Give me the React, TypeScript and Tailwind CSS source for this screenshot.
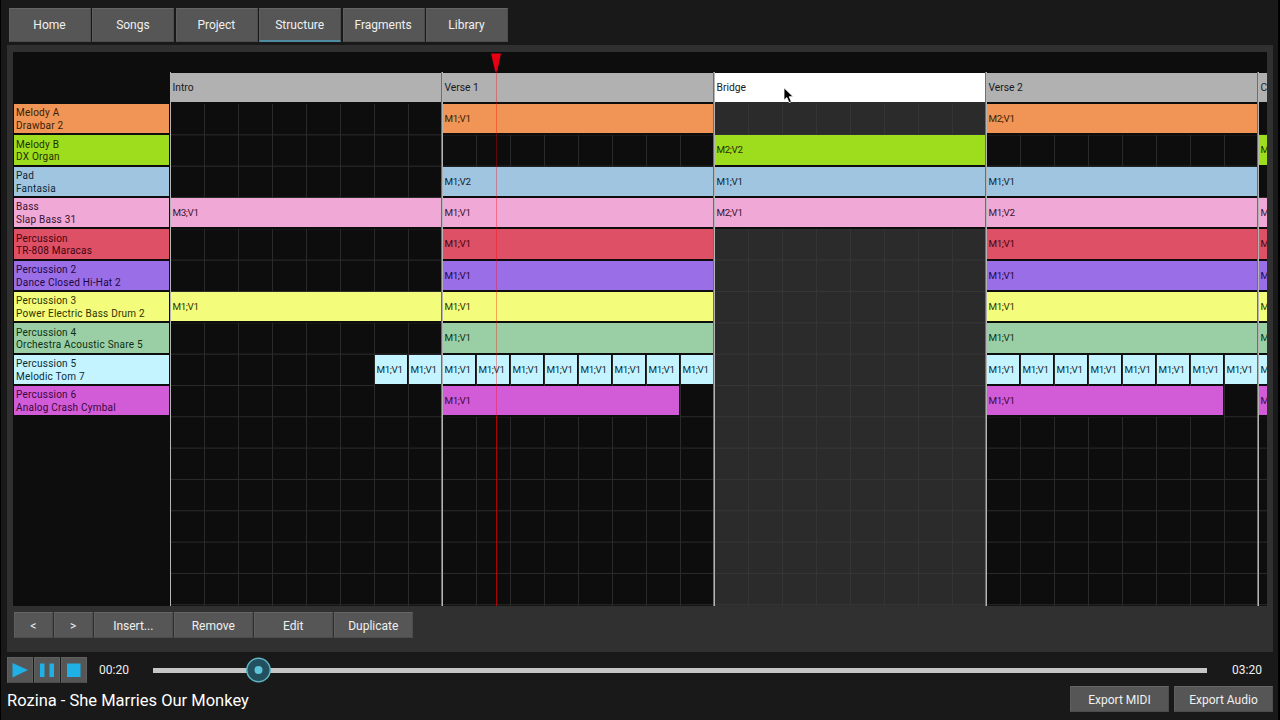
import { clsx } from "clsx";

type Clip = { at: number; span: number; name: string };
type Section = { title: string; selected?: boolean; clips: Record<number, Clip[]> };

const tabs = ["Home", "Songs", "Project", "Structure", "Fragments", "Library"];

const tracks = [
  { name: "Melody A", instrument: "Drawbar 2", color: "bg-[#f09555]", text: "text-[#3a1c06]" },
  { name: "Melody B", instrument: "DX Organ", color: "bg-[#9edd1e]", text: "text-[#1f3000]" },
  { name: "Pad", instrument: "Fantasia", color: "bg-[#9fc5e0]", text: "text-[#0e2636]" },
  { name: "Bass", instrument: "Slap Bass 31", color: "bg-[#f0a8d6]", text: "text-[#3a1230]" },
  { name: "Percussion", instrument: "TR-808 Maracas", color: "bg-[#de5065]", text: "text-[#3f0410]" },
  { name: "Percussion 2", instrument: "Dance Closed Hi-Hat 2", color: "bg-[#9a6ee6]", text: "text-[#1c0745]" },
  { name: "Percussion 3", instrument: "Power Electric Bass Drum 2", color: "bg-[#f3fd7b]", text: "text-[#2f3300]" },
  { name: "Percussion 4", instrument: "Orchestra Acoustic Snare 5", color: "bg-[#9acfa5]", text: "text-[#0d2f16]" },
  { name: "Percussion 5", instrument: "Melodic Tom 7", color: "bg-[#c3f4ff]", text: "text-[#0c2b35]" },
  { name: "Percussion 6", instrument: "Analog Crash Cymbal", color: "bg-[#d25cd7]", text: "text-[#3a063d]" },
];

const full = (name: string): Clip[] => [{ at: 1, span: 8, name }];
const beats = (from: number): Clip[] =>
  Array.from({ length: 9 - from }, (_, i) => ({ at: from + i, span: 1, name: "M1;V1" }));

const sections: Section[] = [
  { title: "Intro", clips: { 3: full("M3;V1"), 6: full("M1;V1"), 8: beats(7) } },
  {
    title: "Verse 1",
    clips: {
      0: full("M1;V1"),
      2: full("M1;V2"),
      3: full("M1;V1"),
      4: full("M1;V1"),
      5: full("M1;V1"),
      6: full("M1;V1"),
      7: full("M1;V1"),
      8: beats(1),
      9: [{ at: 1, span: 7, name: "M1;V1" }],
    },
  },
  { title: "Bridge", selected: true, clips: { 1: full("M2;V2"), 2: full("M1;V1"), 3: full("M2;V1") } },
  {
    title: "Verse 2",
    clips: {
      0: full("M2;V1"),
      2: full("M1;V1"),
      3: full("M1;V2"),
      4: full("M1;V1"),
      5: full("M1;V1"),
      6: full("M1;V1"),
      7: full("M1;V1"),
      8: beats(1),
      9: [{ at: 1, span: 7, name: "M1;V1" }],
    },
  },
  {
    title: "Chorus",
    clips: {
      1: full("M1;V1"),
      3: full("M1;V1"),
      4: full("M1;V1"),
      5: full("M1;V1"),
      6: full("M1;V1"),
      7: full("M1;V1"),
      8: beats(1).slice(0, 1),
      9: full("M1;V1"),
    },
  },
];

function SectionColumn({ section, first }: { section: Section; first: boolean }) {
  return (
    <div
      className={clsx(
        "flex w-[272px] shrink-0 flex-col border-l border-[#b4b4b4]",
        !first && "shadow-[-1px_0_0_#6e6e6e]",
      )}
    >
      <div
        className={clsx(
          "mt-px mr-px flex h-[31px] shrink-0 items-center border-b-2 pt-px pl-[1.5px] text-[10.3px] text-[#1a1a1a]",
          section.selected ? "border-[#2b2b2b] bg-white" : "border-[#0d0d0d] bg-[#b1b1b1]",
        )}
      >
        {section.title}
      </div>
      <div
        className={clsx(
          "flex-1 bg-[length:34px_31.33px]",
          section.selected
            ? "bg-[#2b2b2b] bg-[linear-gradient(90deg,transparent_33px,#353535_33px),linear-gradient(180deg,transparent_30.33px,#363636_30.33px)]"
            : "bg-[linear-gradient(90deg,transparent_33px,#2a2a2a_33px),linear-gradient(180deg,transparent_30.33px,#2b2b2b_30.33px)]",
        )}
      >
        {tracks.map((track, row) => (
          <div key={track.name} className="grid h-[31.33px] grid-cols-[repeat(8,34px)]">
            {(section.clips[row] ?? []).map((clip) => (
              <div
                key={clip.at}
                style={{ gridColumn: `${clip.at} / span ${clip.span}` }}
                className="mr-px h-[31.33px] bg-[#0d0d0d] pr-px pb-[2px]"
              >
                <div
                  className={clsx(
                    "flex h-full items-center overflow-hidden pt-[1.5px] pl-[1.5px] text-[9.8px] tracking-[-0.35px]",
                    track.color,
                    track.text,
                  )}
                >
                  {clip.name}
                </div>
              </div>
            ))}
          </div>
        ))}
      </div>
    </div>
  );
}

function Timeline() {
  return (
    <div className="relative flex h-[554px] overflow-hidden bg-[#0d0d0d] leading-[12.6px]">
      <div className="w-[157px] shrink-0 pt-[52px] pl-px text-[10px] tracking-[0.23px]">
        {tracks.map((track) => (
          <div key={track.name} className="h-[31.33px] pb-[2px]">
            <div className={clsx("mr-px h-full pt-[3.4px] pl-[2px] whitespace-nowrap", track.color, track.text)}>
              <p>{track.name}</p>
              <p>{track.instrument}</p>
            </div>
          </div>
        ))}
      </div>
      <div className="flex min-w-0 flex-1 overflow-hidden pt-[20px]">
        {sections.map((section, i) => (
          <SectionColumn key={section.title} section={section} first={i === 0} />
        ))}
      </div>

      {/* playhead */}
      <div className="absolute top-[20px] bottom-0 left-[483px] w-px bg-[#ff0000]/35" />
      <div className="absolute top-[364px] bottom-0 left-[483px] w-px bg-[#ff0000]/45" />
      <svg className="absolute top-px left-[477px]" width="12" height="19" viewBox="0 0 12 19">
        <path d="M1 0.5H11L7.2 18.5H5.2Z" fill="#e60012" />
      </svg>

      {/* mouse pointer */}
      <svg className="absolute top-[35px] left-[770px]" width="12" height="18" viewBox="0 0 12 18">
        <path
          d="M1 0.8V13.2L3.9 10.5L6.1 15.6L8.4 14.6L6.2 9.7H10.2Z"
          fill="#000"
          stroke="#fff"
          strokeWidth="0.8"
        />
      </svg>
    </div>
  );
}

function Button({ label, className }: { label: string; className: string }) {
  return (
    <button
      className={clsx(
        "flex shrink-0 items-center justify-center border border-t-[#666] border-r-[#4c4c4c] border-b-[#4c4c4c] border-l-[#5e5e5e] bg-[#565656] text-[#f0f0f0]",
        className,
      )}
    >
      {label}
    </button>
  );
}

function TransportButton({ children }: { children: React.ReactNode }) {
  return (
    <button className="flex size-[26px] items-center justify-center border border-[#606060] border-b-[#4c4c4c] bg-[#565656]">
      <svg width="24" height="24" viewBox="0 0 24 24" fill="#1fb0e6">
        {children}
      </svg>
    </button>
  );
}

export default function App() {
  return (
    <div className="h-[720px] w-[1280px] overflow-hidden border-r-2 border-l border-black bg-[#191919] font-['Roboto',sans-serif] text-[12px] text-[#f0f0f0]">
      <nav className="flex h-[45px] gap-[1.4px] pt-[8px] pl-[8px]">
        {tabs.map((tab) => (
          <Button
            key={tab}
            label={tab}
            className={clsx("h-[34px] w-[82px] pr-px", tab === "Structure" ? "border-b-2 border-b-[#4f8ca3] pt-px" : "pb-px")}
          />
        ))}
      </nav>

      <main className="ml-[6px] h-[607px] w-[1266px] bg-[#303030] pt-[7px] pr-[6px] pl-[6px]">
        <Timeline />
        <div className="mt-[6px] flex gap-[1.5px] pl-px">
          <Button label="<" className="h-[26px] w-[38.5px] pt-px" />
          <Button label=">" className="h-[26px] w-[38.5px] pt-px" />
          <Button label="Insert..." className="h-[26px] w-[78.5px] pt-px" />
          <Button label="Remove" className="h-[26px] w-[78.5px] pt-px" />
          <Button label="Edit" className="h-[26px] w-[78.5px] pt-px" />
          <Button label="Duplicate" className="h-[26px] w-[78.5px] pt-px" />
        </div>
      </main>

      <div className="flex h-[34px] items-center pt-px pl-[6px]">
        <div className="flex gap-px">
          <TransportButton>
            <path d="M4.5 5L20 12L4.5 19.5Z" />
          </TransportButton>
          <TransportButton>
            <path d="M5 5.5H9.5V19H5ZM14.5 5.5H19V19H14.5Z" />
          </TransportButton>
          <TransportButton>
            <path d="M5 5.5H18.5V19H5Z" />
          </TransportButton>
        </div>
        <span className="ml-[12px] w-[54px]">00:20</span>
        <div className="relative h-[5px] w-[1054px] translate-y-[1px] bg-[#c6c6c6]">
          <svg className="absolute -top-[11px] left-[92px]" width="26" height="26" viewBox="0 0 26 26">
            <circle cx="13.5" cy="13" r="11.7" fill="#23505f" stroke="#5fb3c4" strokeWidth="1.5" />
            <circle cx="13.5" cy="13" r="4" fill="#5cc3d9" />
          </svg>
        </div>
        <span className="ml-[25px]">03:20</span>
      </div>

      <footer className="flex items-start pl-[6px]">
        <h1 className="flex-1 pt-[3px] text-[16.5px] leading-[24px] text-white">Rozina - She Marries Our Monkey</h1>
        <div className="flex gap-[5px] pr-[5px]">
          <Button label="Export MIDI" className="h-[26px] w-[99px] pt-px" />
          <Button label="Export Audio" className="h-[26px] w-[99px] pt-px" />
        </div>
      </footer>
    </div>
  );
}
